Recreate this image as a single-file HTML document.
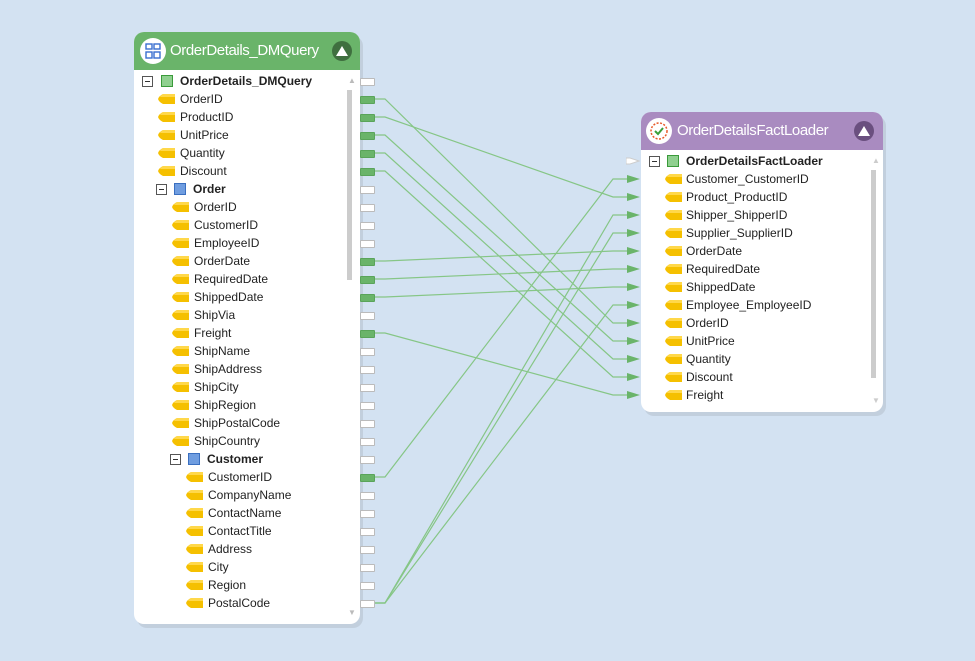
<!DOCTYPE html><html><head><style>
body{margin:0;width:975px;height:661px;background:#d3e2f2;position:relative;overflow:hidden;font-family:"Liberation Sans",Arial,sans-serif;font-size:12px;color:#222}
.p{position:absolute;background:#fff;border-radius:10px;box-shadow:3px 4px 0 #c2cfdd}
.h{position:absolute;left:0;right:0;top:0;height:38px;border-radius:10px 10px 0 0;color:#fff;font-size:15px;letter-spacing:-0.4px}
.r{position:absolute;height:18px;line-height:18px;white-space:nowrap}
.t{position:absolute;width:17px;height:10px}
.m{position:absolute;width:9px;height:9px;border:1px solid #555;background:#fff}
.m:after{content:"";position:absolute;left:2px;top:4px;width:5px;height:1px;background:#333}
.sq{position:absolute;width:10px;height:10px;border:1px solid #3a9a3a;background:#8fd08f}
.bq{position:absolute;width:10px;height:10px;border:1px solid #3a6fc0;background:#6f9de0}
.port{position:absolute;width:13px;height:6px;border:1px solid #bbb;background:#fff;border-radius:1px}
.g{background:#6ab46a;border-color:#5aa45a}
</style></head><body>
<svg width="975" height="661" style="position:absolute;left:0;top:0" xmlns="http://www.w3.org/2000/svg">
<g stroke="#86c686" stroke-width="1.2" fill="none" id="ln"></g>
</svg>
<div class="p" style="left:134px;top:32px;width:226px;height:592px">
<div class="h" style="background:#6ab46a"><div style="position:absolute;left:6px;top:6px;width:26px;height:26px;border-radius:50%;background:#fff"><svg width="26" height="26"><g fill="none" stroke="#3a6fd0" stroke-width="1.4"><rect x="6" y="6" width="6" height="5"/><rect x="14" y="6" width="6" height="5"/><rect x="6" y="14" width="6" height="6"/><rect x="14" y="14" width="6" height="6"/></g></svg></div><span style="position:absolute;left:36px;top:10px">OrderDetails_DMQuery</span><div style="position:absolute;left:198px;top:9px;width:20px;height:20px;border-radius:50%;background:#3f6f3f"><svg width="20" height="20"><path d="M4 15L10 5L16 15Z" fill="#fff"/></svg></div></div>
<div style="position:absolute;left:213px;top:58px;width:5px;height:190px;background:#ccc"></div>
<div style="position:absolute;left:214px;top:44px;color:#bbb;font-size:8px">▲</div>
<div style="position:absolute;left:214px;top:576px;color:#bbb;font-size:8px">▼</div>
</div>
<div class="p" style="left:641px;top:112px;width:242px;height:300px">
<div class="h" style="background:#a98bc0"><div style="position:absolute;left:5px;top:6px;width:26px;height:26px;border-radius:50%;background:#fff"><svg width="26" height="26"><circle cx="13" cy="13" r="8" fill="none" stroke="#e85a2a" stroke-width="1.5" stroke-dasharray="2 1.5"/><path d="M9 13l3 3 5-6" fill="none" stroke="#3aa03a" stroke-width="2"/></svg></div><span style="position:absolute;left:36px;top:10px">OrderDetailsFactLoader</span><div style="position:absolute;left:213px;top:9px;width:20px;height:20px;border-radius:50%;background:#6a4f7f"><svg width="20" height="20"><path d="M4 15L10 5L16 15Z" fill="#fff"/></svg></div></div>
<div style="position:absolute;left:230px;top:58px;width:5px;height:208px;background:#ccc"></div>
<div style="position:absolute;left:231px;top:44px;color:#ccc;font-size:8px">▲</div>
<div style="position:absolute;left:231px;top:284px;color:#ccc;font-size:8px">▼</div>
</div>
<div id="rows"></div>
<script>
var L=[[0,"OrderDetails_DMQuery","top"],[1,"OrderID"],[1,"ProductID"],[1,"UnitPrice"],[1,"Quantity"],[1,"Discount"],[1,"Order","grp"],[2,"OrderID"],[2,"CustomerID"],[2,"EmployeeID"],[2,"OrderDate"],[2,"RequiredDate"],[2,"ShippedDate"],[2,"ShipVia"],[2,"Freight"],[2,"ShipName"],[2,"ShipAddress"],[2,"ShipCity"],[2,"ShipRegion"],[2,"ShipPostalCode"],[2,"ShipCountry"],[2,"Customer","grp"],[3,"CustomerID"],[3,"CompanyName"],[3,"ContactName"],[3,"ContactTitle"],[3,"Address"],[3,"City"],[3,"Region"],[3,"PostalCode"]];
var green=[1,2,3,4,5,10,11,12,14,22];
var tag='<svg class="t" viewBox="0 0 17 10" style="left:LEFTpx;top:4px;position:absolute"><path d="M5 0H17V10H5Q1 8 0 5Q1 2 5 0Z" fill="#f5c000"/><path d="M5 0H17V3H2Q3 1 5 0Z" fill="#ffd84a"/></svg>';
var h="";
L.forEach(function(r,i){var y=72+18*i;var lv=r[0];
 if(r[2]=="top"){h+='<div class="m" style="left:142px;top:'+(y+4)+'px"></div><div class="sq" style="left:161px;top:'+(y+3)+'px"></div><div class="r" style="left:180px;top:'+y+'px;font-weight:bold">'+r[1]+'</div>';}
 else if(r[2]=="grp"){var mx=lv==1?156:170;h+='<div class="m" style="left:'+mx+'px;top:'+(y+4)+'px"></div><div class="bq" style="left:'+(mx+18)+'px;top:'+(y+3)+'px"></div><div class="r" style="left:'+(mx+37)+'px;top:'+y+'px;font-weight:bold">'+r[1]+'</div>';}
 else{var ix=lv==1?158:lv==2?172:186;h+='<div class="r" style="left:0;top:'+y+'px;width:400px">'+tag.replace("LEFT",ix)+'<span style="position:absolute;left:'+(ix+22)+'px">'+r[1]+'</span></div>';}
 h+='<div class="port'+(green.indexOf(i)>=0?' g':'')+'" style="left:360px;top:'+(y+6)+'px"></div>';
});
var R=["Customer_CustomerID","Product_ProductID","Shipper_ShipperID","Supplier_SupplierID","OrderDate","RequiredDate","ShippedDate","Employee_EmployeeID","OrderID","UnitPrice","Quantity","Discount","Freight"];
h+='<svg style="position:absolute;left:626px;top:157px" width="14" height="8"><path d="M0 1H4L13 4L4 7H0Z" fill="#fff" stroke="#ccc"/></svg>';
h+='<div class="m" style="left:649px;top:156px"></div><div class="sq" style="left:667px;top:155px"></div><div class="r" style="left:686px;top:152px;font-weight:bold">OrderDetailsFactLoader</div>';
R.forEach(function(n,j){var y=170+18*j;h+='<div class="r" style="left:0;top:'+y+'px;width:900px">'+tag.replace("LEFT",665)+'<span style="position:absolute;left:686px">'+n+'</span></div>';});
document.getElementById("rows").innerHTML=h;
var M=[[99,323],[117,197],[135,341],[153,359],[171,377],[261,251],[279,269],[297,287],[333,395],[477,179],[603,215],[603,233],[603,305]];
var s="";M.forEach(function(m){s+='<path d="M374 '+m[0]+'H385L613 '+m[1]+'H628"/><path d="M627 '+(m[1]-4)+'L640 '+m[1]+'L627 '+(m[1]+4)+'Z" fill="#6ab46a" stroke="none"/>';});
document.getElementById("ln").innerHTML=s;
</script>
</body></html>
